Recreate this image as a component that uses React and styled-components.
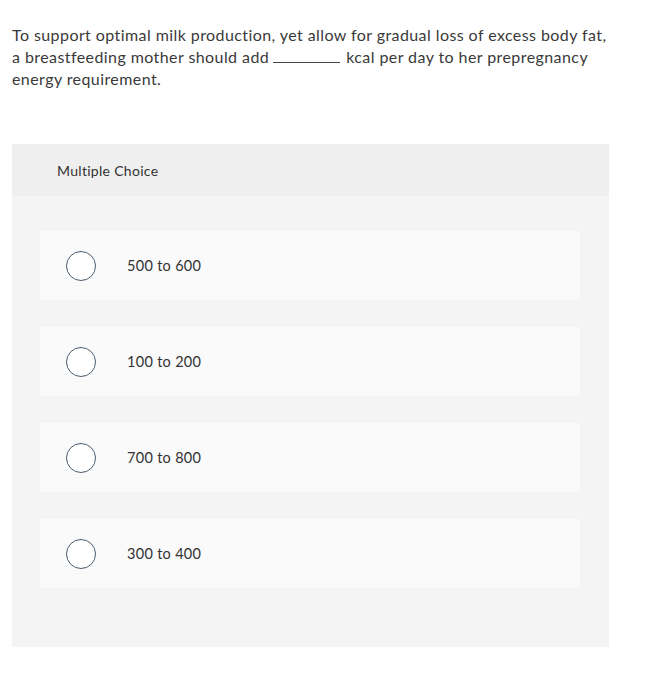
import React from "react";
import styled, { createGlobalStyle } from "styled-components";

const GlobalStyle = createGlobalStyle`
body {
  margin: 0;
  background: #fff;
  font-family: Lato, "Liberation Sans", sans-serif;
}
`;

const Page = styled.div`
  padding: 24px 49px 40px 12px;
`;

const Prompt = styled.p`
  margin: 0 0 54px 0;
  font-size: 16px;
  letter-spacing: 0.42px;
  line-height: 22px;
  color: #3a3a3a;
  white-space: nowrap;
`;

const Blank = styled.span`
  display: inline-block;
  width: 67px;
  border-bottom: 1px solid #444;
  margin: 0 6px 0 4px;
  height: 12px;
`;

const Panel = styled.div`
  background: #f4f4f4;
`;

const PanelHeader = styled.div`
  background: #efefef;
  height: 52px;
  display: flex;
  align-items: center;
  padding-left: 45px;
  font-size: 14px;
  letter-spacing: 0.3px;
  color: #333;
`;

const Options = styled.div`
  display: flex;
  flex-direction: column;
  gap: 27px;
  padding: 35px 29px 59px 28px;
`;

const Option = styled.label`
  display: flex;
  align-items: center;
  height: 69px;
  background: #fafafa;
  padding-left: 26px;
  font-size: 14.5px;
  letter-spacing: 0.3px;
  color: #333;
  cursor: pointer;
`;

const Radio = styled.span`
  width: 28px;
  height: 28px;
  border: 1.5px solid #4a5b6d;
  border-radius: 50%;
  background: #fff;
  margin-right: 31px;
  flex-shrink: 0;
`;

const choices = ["500 to 600", "100 to 200", "700 to 800", "300 to 400"];

export default function App() {
  return (
    <Page>
      <GlobalStyle />
      <Prompt>
        To support optimal milk production, yet allow for gradual loss of excess body fat,
        <br />
        a breastfeeding mother should add<Blank />kcal per day to her prepregnancy
        <br />
        energy requirement.
      </Prompt>
      <Panel>
        <PanelHeader>Multiple Choice</PanelHeader>
        <Options>
          {choices.map((c) => (
            <Option key={c}>
              <Radio />
              {c}
            </Option>
          ))}
        </Options>
      </Panel>
    </Page>
  );
}
